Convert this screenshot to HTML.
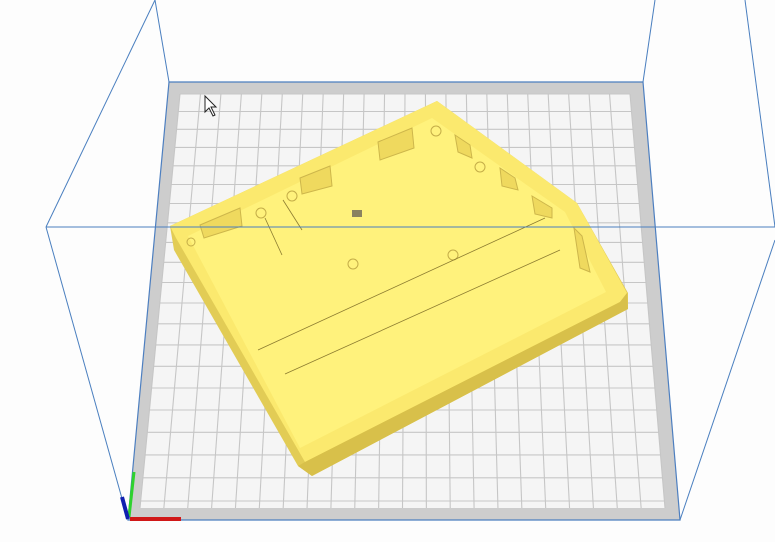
<!DOCTYPE html><html><head><style>body{margin:0;background:#fff;width:775px;height:542px;overflow:hidden}</style></head><body>
<svg id="s" width="775" height="542" viewBox="0 0 775 542" xmlns="http://www.w3.org/2000/svg">
<rect width="775" height="542" fill="#fdfdfd"/>
<polygon points="169,82 643,82 680,520 128,520" fill="#cdcdcd"/>
<polygon points="180,94 630,94 665,508 140,508" fill="#f5f5f5"/>
<g id="g" stroke="#c6c6c6" stroke-width="1.1"></g>
<polygon points="169,82 643,82 680,520 128,520" fill="none" stroke="#4d7fc0" stroke-width="1.2"/>
<g stroke="#4a7fbf" stroke-width="1" fill="none">
<line x1="169" y1="82" x2="155" y2="0"/><line x1="643" y1="82" x2="655" y2="0"/>
<line x1="46" y1="227" x2="155" y2="0"/><line x1="46" y1="227" x2="128" y2="520"/>
<line x1="775" y1="227" x2="745" y2="0"/><line x1="680" y1="520" x2="775" y2="240"/>
</g>
<polygon points="170,226 437,101 577,203 628,293 628,309 312,476 298,466 174,250" fill="#e2cc55"/>
<polygon points="170,226 437,101 577,203 627,293 620,302 305,462 176,238" fill="#fbe96e"/>
<polygon points="188,236 432,118 565,212 606,292 300,448" fill="#fff27c"/>
<polygon points="298,466 312,476 628,309 627,293 620,302 305,462" fill="#d8c04a"/>
<g fill="#efd95e" stroke="#cdb64b" stroke-width="1">
<polygon points="378,142 412,128 414,148 380,160"/><polygon points="300,178 330,166 332,186 302,194"/>
<polygon points="200,225 240,208 242,226 204,238"/><polygon points="455,135 470,145 472,158 458,152"/>
<polygon points="500,168 515,178 518,190 502,186"/><polygon points="532,196 552,208 552,218 535,214"/>
<polygon points="574,228 582,236 590,272 580,268"/>
</g>
<g fill="none" stroke="#c4ad48"><circle cx="436" cy="131" r="5"/><circle cx="480" cy="167" r="5"/><circle cx="292" cy="196" r="5"/><circle cx="261" cy="213" r="5"/><circle cx="353" cy="264" r="5"/><circle cx="453" cy="255" r="5"/><circle cx="191" cy="242" r="4"/></g>
<g stroke="#8c7c30" stroke-width=".8"><line x1="285" y1="374" x2="560" y2="250"/><line x1="258" y1="350" x2="545" y2="218"/><line x1="265" y1="218" x2="282" y2="255"/><line x1="283" y1="200" x2="302" y2="230"/></g>
<rect x="352" y="210" width="10" height="7" fill="#8a8260"/>
<line x1="46" y1="227" x2="775" y2="227" stroke="#4a7fbf" stroke-width="1"/>
<line x1="130" y1="519" x2="181" y2="519" stroke="#d01818" stroke-width="4"/>
<line x1="129" y1="517" x2="134" y2="472" stroke="#2ed22e" stroke-width="3"/>
<line x1="128" y1="519" x2="122" y2="497" stroke="#1020b0" stroke-width="4"/>
<path d="M205,96 L205,112 L209,108 L213,116 L215,115 L211,107 L216,107 Z" fill="#fff" stroke="#222" stroke-width="1"/>
</svg>
<script>
var g=document.getElementById('g'),n='http://www.w3.org/2000/svg';
function L(a,b,c,d){var l=document.createElementNS(n,'line');l.setAttribute('x1',a);l.setAttribute('y1',b);l.setAttribute('x2',c);l.setAttribute('y2',d);g.appendChild(l);}
for(var i=0;i<=22;i++){L(180+i*450/22,94,140+i*525/22,508);}
var y=94,h=17.5;while(y<508){var t=(y-94)/414;L(180-40*t,y,630+35*t,y);y+=h;h+=0.3;}
</script>
</body></html>
